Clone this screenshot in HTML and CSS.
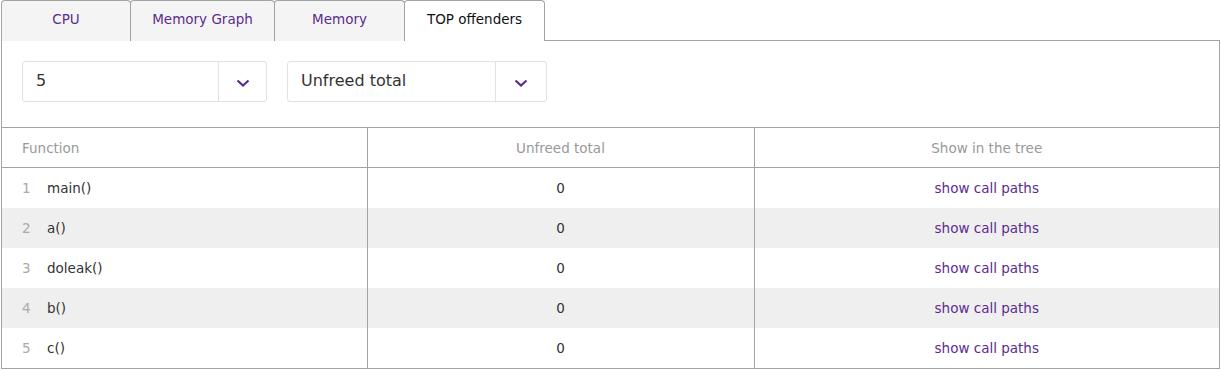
FILE: index.html
```html
<!DOCTYPE html>
<html lang="en">
<head>
    <meta charset="UTF-8">
    <meta name="viewport" content="width=device-width, initial-scale=1.0">
    <title>TOP offenders</title>
    <link rel="stylesheet" href="styles.css">
</head>
<body>
    <div class="tabs">
        <div class="tab tab-cpu">CPU</div>
        <div class="tab tab-graph">Memory Graph</div>
        <div class="tab tab-memory">Memory</div>
        <div class="tab tab-top active">TOP offenders</div>
    </div>

    <div class="panel">
        <div class="controls">
            <div class="select select-count">
                <span class="select-value">5</span>
                <span class="select-arrow">
                    <svg width="14" height="8" viewBox="0 0 14 8"><path d="M1.5 1.5 L7 6.5 L12.5 1.5" fill="none" stroke="#5b2c8f" stroke-width="2.2"/></svg>
                </span>
            </div>
            <div class="select select-metric">
                <span class="select-value">Unfreed total</span>
                <span class="select-arrow">
                    <svg width="14" height="8" viewBox="0 0 14 8"><path d="M1.5 1.5 L7 6.5 L12.5 1.5" fill="none" stroke="#5b2c8f" stroke-width="2.2"/></svg>
                </span>
            </div>
        </div>

        <table class="offenders">
            <thead>
                <tr>
                    <th class="col-func">Function</th>
                    <th class="col-total">Unfreed total</th>
                    <th class="col-tree">Show in the tree</th>
                </tr>
            </thead>
            <tbody>
                <tr>
                    <td class="col-func"><span class="num">1</span>main()</td>
                    <td class="col-total">0</td>
                    <td class="col-tree"><a href="#">show call paths</a></td>
                </tr>
                <tr>
                    <td class="col-func"><span class="num">2</span>a()</td>
                    <td class="col-total">0</td>
                    <td class="col-tree"><a href="#">show call paths</a></td>
                </tr>
                <tr>
                    <td class="col-func"><span class="num">3</span>doleak()</td>
                    <td class="col-total">0</td>
                    <td class="col-tree"><a href="#">show call paths</a></td>
                </tr>
                <tr>
                    <td class="col-func"><span class="num">4</span>b()</td>
                    <td class="col-total">0</td>
                    <td class="col-tree"><a href="#">show call paths</a></td>
                </tr>
                <tr>
                    <td class="col-func"><span class="num">5</span>c()</td>
                    <td class="col-total">0</td>
                    <td class="col-tree"><a href="#">show call paths</a></td>
                </tr>
            </tbody>
        </table>
    </div>
</body>
</html>
```

FILE: styles.css
```css
body {
    margin: 0 1px;
    font-family: "DejaVu Sans", Arial, sans-serif;
    font-size: 13.5px;
    color: #333;
    background: white;
}
.tabs {
    display: flex;
    height: 40px;
}
.tab {
    box-sizing: border-box;
    height: 41px;
    border: 1px solid #a3a3a3;
    border-bottom: none;
    border-radius: 4px 4px 0 0;
    background: #f4f4f4;
    color: #5b2c8f;
    display: flex;
    align-items: center;
    justify-content: center;
    padding-bottom: 4px;
    margin-right: -1px;
    position: relative;
}
.tab-cpu { width: 130px; }
.tab-graph { width: 145px; }
.tab-memory { width: 131px; }
.tab-top { width: 141px; }
.tab.active {
    background: white;
    color: #111;
    z-index: 1;
}
.panel {
    border: 1px solid #a3a3a3;
    height: 329px;
    box-sizing: border-box;
}
.controls {
    display: flex;
    gap: 20px;
    padding: 20px 20px 25px;
}
.select {
    box-sizing: border-box;
    height: 41px;
    border: 1px solid #e2e2e2;
    border-radius: 3px;
    display: flex;
    align-items: center;
    font-size: 16px;
    color: #333;
}
.select-count { width: 245px; }
.select-metric { width: 260px; }
.select-value {
    flex: 1;
    padding-left: 13px;
    padding-bottom: 3px;
}
.select-arrow {
    height: 100%;
    border-left: 1px solid #e2e2e2;
    display: flex;
    align-items: center;
    justify-content: center;
    padding-top: 2px;
    box-sizing: border-box;
}
.select-count .select-arrow { width: 48px; }
.select-metric .select-arrow { width: 51px; }
.offenders {
    width: 100%;
    border-collapse: collapse;
    table-layout: fixed;
}
.offenders th {
    height: 40px;
    font-weight: normal;
    color: #999;
    border-top: 1px solid #a3a3a3;
    border-bottom: 1px solid #a3a3a3;
    padding-bottom: 1px;
}
.offenders td {
    height: 40px;
    padding: 0;
}
.offenders th, .offenders td {
    border-right: 1px solid #a3a3a3;
    box-sizing: border-box;
}
.offenders th:last-child, .offenders td:last-child {
    border-right: none;
}
.offenders tbody tr:nth-child(even) {
    background: #efefef;
}
.col-func {
    width: 365px;
    text-align: left;
    padding-left: 20px !important;
}
.col-total {
    width: 387px;
    text-align: center;
}
.col-tree {
    text-align: center;
}
.num {
    display: inline-block;
    width: 25px;
    color: #aaa;
}
.offenders a {
    color: #5b2c8f;
    text-decoration: none;
}
```
